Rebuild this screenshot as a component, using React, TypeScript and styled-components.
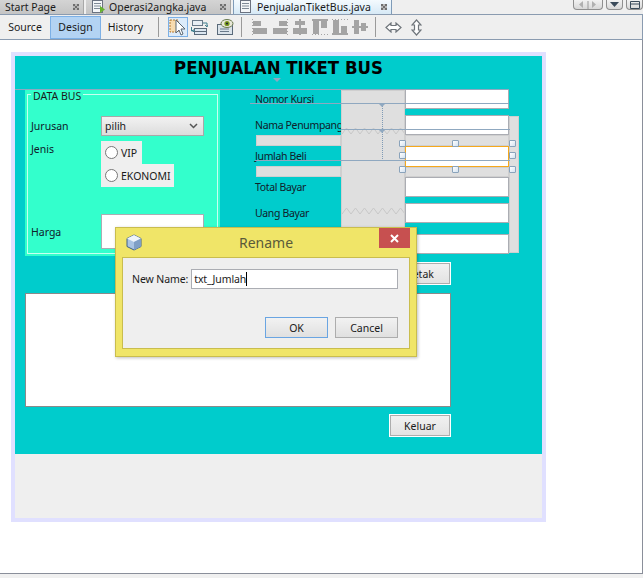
import React from 'react'
import styled, { createGlobalStyle } from 'styled-components'

const GlobalStyle = createGlobalStyle`
	html, body { margin: 0; padding: 0; background: #f0f0f0; }
	body { font-family: "Noto Sans", "Liberation Sans", sans-serif; font-size: 10.5px; color: #1a1a1a; }
	* { box-sizing: border-box; }
`

const Page = styled.div`
	width: 643px;
	height: 578px;
	display: flex;
	flex-direction: column;
	overflow: hidden;
	background: #f0f0f0;
`

/* editor tabs */
const TabStrip = styled.div`
	height: 15px;
	flex: none;
	display: flex;
	border-bottom: 1px solid #8a9bb0;
	background: #efefef;
`
const Tab = styled.div<{ $w: number; $active?: boolean }>`
	width: ${p => p.$w}px;
	margin-right: 2px;
	padding: 0 3px 1px 5px;
	display: flex;
	align-items: center;
	gap: 4px;
	line-height: 12px;
	overflow: hidden;
	background: ${p => (p.$active ? 'linear-gradient(#f4fafe, #d6e9f6)' : 'linear-gradient(#d4d4d4, #c4c4c4)')};
	border-right: 1px solid ${p => (p.$active ? '#7f9bb8' : '#a8a8a8')};
	border-left: ${p => (p.$active ? '1px solid #7f9bb8' : 'none')};
	& > span { flex: 1; white-space: nowrap; }
	& > svg { flex: none; }
`
const WindowControls = styled.div`
	margin-left: auto;
	display: flex;
	gap: 3px;
	align-items: flex-start;
`
const WindowButton = styled.div<{ $w: number }>`
	width: ${p => p.$w}px;
	height: 10px;
	display: flex;
	align-items: center;
	justify-content: center;
	border: 1px solid #8f8f8f;
	border-top: none;
	border-radius: 0 0 4px 4px;
	background: linear-gradient(#f2f2f2, #d8d8d8);
`

/* toolbar */
const Toolbar = styled.div`
	height: 25px;
	flex: none;
	display: flex;
	align-items: center;
	border-bottom: 1px solid #8a9bb0;
	border-right: 1px solid #8a9bb0;
	background: #efefef;
`
const ViewButton = styled.div<{ $w: number; $active?: boolean }>`
	width: ${p => p.$w}px;
	height: 23px;
	display: flex;
	align-items: center;
	justify-content: center;
	background: ${p => (p.$active ? '#b3d3f3' : 'transparent')};
	border: 1px solid ${p => (p.$active ? '#7cb0e6' : 'transparent')};
`
const ToolDivider = styled.div<{ $left: number; $right: number }>`
	width: 1px;
	height: 20px;
	flex: none;
	background: #9a9a9a;
	margin: 0 ${p => p.$right}px 0 ${p => p.$left}px;
`
const ToolIcon = styled.div<{ $w: number; $after?: number; $toggled?: boolean }>`
	width: ${p => p.$w}px;
	height: 20px;
	flex: none;
	margin-right: ${p => p.$after ?? 0}px;
	display: flex;
	align-items: center;
	justify-content: center;
	border: 1px solid ${p => (p.$toggled ? '#7cb0e6' : 'transparent')};
	background: ${p => (p.$toggled ? '#dcebfa' : 'transparent')};
	& > svg { flex: none; }
`

/* designer surface */
const Surface = styled.div`
	height: 534px;
	flex: none;
	padding: 12px 0 0 11px;
	background: #fff;
	border-right: 1px solid #8a8f9a;
	border-bottom: 1px solid #8a8f9a;
`
const FormFrame = styled.div`
	width: 535px;
	height: 470px;
	display: flex;
	flex-direction: column;
	border: 4px solid #e0e0ff;
	background: #efefef;
`
const FormCanvas = styled.div`
	position: relative;
	height: 398px;
	flex: none;
	padding-left: 10px;
	display: flex;
	flex-direction: column;
	background: #00cccc;
`
const FormTitle = styled.div`
	height: 33px;
	flex: none;
	margin-left: -10px;
	text-align: center;
	font-size: 18px;
	line-height: 24px;
	font-weight: 700;
	color: #000;
	font-family: "DejaVu Sans", sans-serif;
	transform: scaleX(0.92);
`
const MainRow = styled.div`
	height: 167px;
	flex: none;
	display: flex;
	align-items: flex-start;
`
const Panel = styled.div`
	position: relative;
	width: 195px;
	height: 167px;
	flex: none;
	margin-right: 35px;
	padding-top: 27px;
	display: flex;
	flex-direction: column;
	background: #33ffcc;
`
const PanelBorder = styled.div`
	position: absolute;
	left: 2px;
	right: 2px;
	top: 5px;
	bottom: 2px;
	border: 1px solid #c8fff0;
`
const PanelLegend = styled.div`
	position: absolute;
	left: 6px;
	top: 0;
	padding: 0 2px;
	line-height: 14px;
	background: #33ffcc;
`
const PanelRow = styled.div<{ $top?: number; $start?: boolean }>`
	position: relative;
	display: grid;
	grid-template-columns: 76px 103px;
	align-items: ${p => (p.$start ? 'start' : 'center')};
	margin-top: ${p => p.$top ?? 0}px;
`
const PanelLabel = styled.div<{ $drop?: number }>`
	padding-left: 6px;
	margin-top: ${p => p.$drop ?? 0}px;
	line-height: 14px;
	color: #10202a;
`
const PanelField = styled.div`
	height: 35px;
	background: #fff;
	border: 1px solid #abadb3;
`
const Combo = styled.div`
	height: 20px;
	display: flex;
	align-items: center;
	justify-content: space-between;
	padding: 0 5px 0 3px;
	border: 1px solid #a8a8a8;
	background: linear-gradient(#f2f2f2, #dcdcdc);
`
const RadioGroup = styled.div`
	display: flex;
	flex-direction: column;
	align-items: flex-start;
`
const RadioRow = styled.div<{ $w: number }>`
	width: ${p => p.$w}px;
	height: 23px;
	display: flex;
	align-items: center;
	gap: 3px;
	padding-left: 4px;
	background: #efefef;
`
const RadioDot = styled.span`
	width: 13px;
	height: 13px;
	flex: none;
	border-radius: 50%;
	background: #fff;
	border: 1px solid #777;
`
const LabelColumn = styled.div`
	width: 86px;
	flex: none;
	padding-top: 3px;
	display: flex;
	flex-direction: column;
`
const FieldLabel = styled.div<{ $after?: number }>`
	height: 14px;
	line-height: 14px;
	margin-bottom: ${p => p.$after ?? 0}px;
	white-space: nowrap;
	letter-spacing: -0.35px;
	color: #10202a;
`
const GapBar = styled.div<{ $h?: number }>`
	height: ${p => p.$h ?? 11}px;
	flex: none;
	background: #dfdfdf;
	border: 1px solid #cfcfcf;
`
const LabelBar = styled(GapBar)`
	margin: 3px 0 3px 1px;
`
const GapColumn = styled.div`
	width: 64px;
	height: 150px;
	flex: none;
	margin-top: 1px;
	background: #dfdfdf;
	border: 1px solid #cfcfcf;
`
const FieldColumn = styled.div`
	width: 104px;
	flex: none;
	display: flex;
	flex-direction: column;
`
const TextField = styled.div<{ $h?: number; $after?: number; $selected?: boolean }>`
	height: ${p => p.$h ?? 20}px;
	flex: none;
	margin-bottom: ${p => p.$after ?? 0}px;
	background: #fff;
	border: 1px solid ${p => (p.$selected ? '#f5a81c' : '#abadb3')};
`
const SideBar = styled(GapBar)`
	width: 10px;
	margin-top: 27px;
`
const BottomColumn = styled.div`
	width: 426px;
	flex: none;
	display: flex;
	flex-direction: column;
	align-items: flex-end;
`
const FormButton = styled.div<{ $top: number }>`
	width: 62px;
	height: 23px;
	margin-top: ${p => p.$top}px;
	display: flex;
	align-items: center;
	justify-content: center;
	border: 1px solid #fff;
	outline: 1px solid #adadad;
	outline-offset: -2px;
	background: linear-gradient(#f2f2f2, #e2e2e2);
`
const TextArea = styled.div`
	width: 100%;
	height: 114px;
	margin-top: 8px;
	background: #fff;
	border: 1px solid #8a8a8a;
`

/* designer overlays, drawn over the form */
const GuideLine = styled.div<{ $x: number; $y: number; $w: number }>`
	position: absolute;
	left: ${p => p.$x}px;
	top: ${p => p.$y}px;
	width: ${p => p.$w}px;
	height: 1px;
	background: #8fa8c0;
`
const GuideDots = styled.div<{ $y: number; $h: number }>`
	position: absolute;
	left: 367px;
	top: ${p => p.$y}px;
	height: ${p => p.$h}px;
	border-left: 1px dotted #7f9ab5;
`
const Anchor = styled.div<{ $x: number; $y: number }>`
	position: absolute;
	left: ${p => p.$x}px;
	top: ${p => p.$y}px;
	width: 0;
	height: 0;
	border-left: 4px solid transparent;
	border-right: 4px solid transparent;
	border-top: 4px solid #8fa8c0;
`
const Handle = styled.div<{ $x: number; $y: number }>`
	position: absolute;
	left: ${p => p.$x}px;
	top: ${p => p.$y}px;
	width: 7px;
	height: 7px;
	background: linear-gradient(135deg, #ffffff, #d4e2f0);
	border: 1px solid #8aa3bb;
	border-radius: 1px;
`
const Zigzag = styled.svg<{ $y: number }>`
	position: absolute;
	left: 327px;
	top: ${p => p.$y}px;
`

/* rename dialog */
const Dialog = styled.div`
	position: absolute;
	left: 100px;
	top: 171px;
	width: 302px;
	height: 130px;
	display: flex;
	flex-direction: column;
	padding: 0 6px 7px 6px;
	background: #f0e568;
	border: 1px solid #c9bd4e;
	box-shadow: 1px 1px 3px rgba(0, 0, 0, 0.25);
	z-index: 2;
`
const DialogHeader = styled.div`
	position: relative;
	height: 29px;
	flex: none;
	display: flex;
	align-items: center;
	justify-content: center;
	font-size: 14px;
	color: #5a5a3a;
`
const DialogIcon = styled.svg`
	position: absolute;
	left: 4px;
	top: 6px;
`
const CloseButton = styled.div`
	position: absolute;
	right: 0;
	top: 0;
	width: 31px;
	height: 20px;
	display: flex;
	align-items: center;
	justify-content: center;
	background: #c75050;
`
const DialogBody = styled.div`
	flex: 1;
	display: flex;
	flex-direction: column;
	justify-content: space-between;
	padding: 11px 11px 10px 9px;
	background: #efefef;
	border: 1px solid #c9bd4e;
`
const NameRow = styled.div`
	display: flex;
	align-items: center;
	gap: 3px;
	letter-spacing: -0.1px;
`
const NameInput = styled.div`
	flex: 1;
	height: 20px;
	display: flex;
	align-items: center;
	padding-left: 2px;
	background: #fff;
	border: 1px solid #abadb3;
`
const Caret = styled.span`
	width: 1px;
	height: 14px;
	background: #000;
`
const DialogActions = styled.div`
	display: flex;
	justify-content: flex-end;
	gap: 7px;
`
const DialogButton = styled.div<{ $primary?: boolean }>`
	width: 63px;
	height: 21px;
	display: flex;
	align-items: center;
	justify-content: center;
	background: linear-gradient(#f2f2f2, #e0e0e0);
	border: 1px solid ${p => (p.$primary ? '#6aa5e2' : '#adadad')};
`

const CloseMark = () => (
	<svg width="8" height="8" viewBox="0 0 8 8">
		<path d="M1 1h2v2H1zM5 1h2v2H5zM3 3h2v2H3zM1 5h2v2H1zM5 5h2v2H5z" fill="#6f6f6f" />
		<path d="M3 1h2v2H3zM1 3h2v2H1zM5 3h2v2H5zM3 5h2v2H3z" fill="#b5b5b5" />
	</svg>
)

const DocIcon = ({ badge }: { badge?: boolean }) => (
	<svg width="14" height="13" viewBox="0 0 14 13">
		<rect x="1.5" y="0.5" width="10" height="12" fill="#f4f6f8" stroke="#6b7280" />
		<path d="M3 3.5h7M3 6h7M3 8.5h7" stroke="#7f8a96" />
		{badge && <path d="M9 6l5 3.5L9 13z" fill="#66b32e" />}
	</svg>
)

const dotsLeft = 'M0 0h1v1H0zM0 3h1v1H0zM0 6h1v1H0zM0 9h1v1H0zM0 12h1v1H0zM0 15h1v1H0z'
const dotsRight = 'M15 0h1v1h-1zM15 3h1v1h-1zM15 6h1v1h-1zM15 9h1v1h-1zM15 12h1v1h-1zM15 15h1v1h-1z'
const dotsBottom = 'M0 15h1v1H0zM3 15h1v1H3zM6 15h1v1H6zM9 15h1v1H9zM12 15h1v1h-1zM15 15h1v1h-1z'
const dotsTop = 'M0 0h1v1H0zM3 0h1v1H3zM6 0h1v1H6zM9 0h1v1H9zM12 0h1v1h-1zM15 0h1v1h-1z'

const alignPaths = [
	dotsLeft + 'M1 2h8v5H1zM1 9h14v6H1z',
	dotsRight + 'M7 2h8v5H7zM1 9h14v6H1z',
	'M7 0h2v16H7zM3 2h10v4H3zM1 9h14v6H1z',
	dotsBottom + 'M0 0h16v2H0zM1 2h6v13H1zM9 2h6v7H9z',
	dotsTop + 'M0 14h16v2H0zM1 1h6v13H1zM9 7h6v7H9z',
	'M0 7h16v2H0zM2 1h5v14H2zM9 4h5v8H9z'
]

const zigzag = 'M0 7 ' + Array.from({ length: 7 }, (_, i) => `L${i * 9 + 4.5} 1 L${i * 9 + 9} 7`).join(' ')

export default function App() {
	return (
		<Page>
			<GlobalStyle />
			<TabStrip>
				<Tab $w={84}>
					<span>Start Page</span>
					<CloseMark />
				</Tab>
				<Tab $w={145}>
					<DocIcon badge />
					<span>Operasi2angka.java</span>
					<CloseMark />
				</Tab>
				<Tab $w={159} $active>
					<DocIcon />
					<span>PenjualanTiketBus.java</span>
					<CloseMark />
				</Tab>
				<WindowControls>
					<WindowButton $w={30}>
						<svg width="24" height="8" viewBox="0 0 24 8">
							<path d="M7 0v7L3 3.5zM16 0v7l4-3.5z" fill="#b0b0b0" />
							<path d="M12 0v8" stroke="#9a9a9a" />
						</svg>
					</WindowButton>
					<WindowButton $w={17}>
						<svg width="9" height="5" viewBox="0 0 9 5">
							<path d="M0 0h9L4.5 5z" fill="#3a4a5a" />
						</svg>
					</WindowButton>
					<WindowButton $w={17}>
						<svg width="10" height="8" viewBox="0 0 10 8">
							<path d="M0.5 0.5h9v7h-9zM0.5 3h9" stroke="#3a4a5a" fill="none" />
						</svg>
					</WindowButton>
				</WindowControls>
			</TabStrip>
			<Toolbar>
				<ViewButton $w={50}>Source</ViewButton>
				<ViewButton $w={51} $active>Design</ViewButton>
				<ViewButton $w={49}>History</ViewButton>
				<ToolDivider $left={8} $right={9} />
				<ToolIcon $w={20} $toggled $after={2}>
					<svg width="18" height="18" viewBox="0 0 18 18">
						<rect x="1" y="2" width="8" height="12" fill="#f8dcb0" stroke="#b87a30" strokeDasharray="2 1" />
						<path d="M7 2l9 9h-4l2 5-2 1-2-5-3 3z" fill="#fff" stroke="#5a6672" />
					</svg>
				</ToolIcon>
				<ToolIcon $w={18} $after={8}>
					<svg width="17" height="17" viewBox="0 0 17 17">
						<rect x="1.5" y="1.5" width="10" height="5" fill="#e8eef4" stroke="#6a7a8a" />
						<rect x="3.5" y="9.5" width="12" height="6" fill="#dbe6f0" stroke="#5a6a7a" />
						<path d="M3.5 12.5h12" stroke="#5a6a7a" />
						<path d="M12 4h4v3M14 6l2 2 1-2M0.5 8v4h3M1 11l2 2v-3" stroke="#3f7f8f" fill="none" />
					</svg>
				</ToolIcon>
				<ToolIcon $w={18} $after={7}>
					<svg width="17" height="17" viewBox="0 0 17 17">
						<rect x="0.5" y="5.5" width="15" height="10" fill="#dbe3ea" stroke="#5a6a7a" />
						<path d="M3 10h9M3 12.5h9" stroke="#6a7a8a" />
						<ellipse cx="10" cy="4.5" rx="6" ry="4" fill="#e8e8d8" stroke="#6a7a50" />
						<circle cx="10" cy="4.5" r="2.6" fill="#7a9a20" />
						<circle cx="10" cy="4.5" r="1.1" fill="#223" />
					</svg>
				</ToolIcon>
				<ToolDivider $left={0} $right={10} />
				{alignPaths.map((d, i) => (
					<ToolIcon key={d} $w={16} $after={i === 5 ? 0 : 4}>
						<svg width="16" height="16" viewBox="0 0 16 16">
							<path d={d} fill="#a4a4a4" />
						</svg>
					</ToolIcon>
				))}
				<ToolDivider $left={7} $right={9} />
				<ToolIcon $w={17} $after={9}>
					<svg width="17" height="11" viewBox="0 0 17 11">
						<path d="M1 5.5L6 1v2.5h5V1l5 4.5L11 10V7.5H6V10z" fill="#fff" stroke="#6f757b" strokeWidth="1.2" />
					</svg>
				</ToolIcon>
				<ToolIcon $w={11}>
					<svg width="11" height="17" viewBox="0 0 11 17">
						<path d="M5.5 1L10 6H7.5v5H10l-4.5 5L1 11h2.5V6H1z" fill="#fff" stroke="#6f757b" strokeWidth="1.2" />
					</svg>
				</ToolIcon>
			</Toolbar>
			<Surface>
				<FormFrame>
					<FormCanvas>
						<FormTitle>PENJUALAN TIKET BUS</FormTitle>
						<MainRow>
							<Panel>
								<PanelBorder />
								<PanelLegend>DATA BUS</PanelLegend>
								<PanelRow>
									<PanelLabel>Jurusan</PanelLabel>
									<Combo>
										<span>pilih</span>
										<svg width="9" height="6" viewBox="0 0 9 6">
											<path d="M1 1l3.5 3.5L8 1" stroke="#555" strokeWidth="1.5" fill="none" />
										</svg>
									</Combo>
								</PanelRow>
								<PanelRow $top={5} $start>
									<PanelLabel $drop={1}>Jenis</PanelLabel>
									<RadioGroup>
										<RadioRow $w={41}><RadioDot />VIP</RadioRow>
										<RadioRow $w={73}><RadioDot />EKONOMI</RadioRow>
									</RadioGroup>
								</PanelRow>
								<PanelRow $top={27}>
									<PanelLabel>Harga</PanelLabel>
									<PanelField />
								</PanelRow>
							</Panel>
							<LabelColumn>
								<FieldLabel $after={12}>Nomor Kursi</FieldLabel>
								<FieldLabel>Nama Penumpang</FieldLabel>
								<LabelBar />
								<FieldLabel>Jumlah Beli</FieldLabel>
								<LabelBar />
								<FieldLabel $after={12}>Total Bayar</FieldLabel>
								<FieldLabel>Uang Bayar</FieldLabel>
							</LabelColumn>
							<GapColumn />
							<FieldColumn>
								<TextField $after={6} />
								<TextField />
								<GapBar />
								<TextField $h={21} $selected />
								<GapBar $h={10} />
								<TextField $after={6} />
								<TextField $after={11} />
								<TextField />
							</FieldColumn>
							<SideBar $h={137} />
						</MainRow>
						<BottomColumn>
							<FormButton $top={6}>Cetak</FormButton>
							<TextArea />
							<FormButton $top={7}>Keluar</FormButton>
						</BottomColumn>

						<Anchor $x={258} $y={22} />
						<Zigzag $y={71} width="62" height="8" viewBox="0 0 62 8">
							<path d={zigzag} stroke="#c8c8c8" fill="none" />
						</Zigzag>
						<Zigzag $y={151} width="62" height="8" viewBox="0 0 62 8">
							<path d={zigzag} stroke="#c8c8c8" fill="none" />
						</Zigzag>
						<GuideLine $x={0} $y={33} $w={494} />
						<GuideLine $x={235} $y={47} $w={259} />
						<GuideLine $x={326} $y={73} $w={169} />
						<GuideLine $x={240} $y={104} $w={255} />
						<GuideDots $y={48} $h={25} />
						<GuideDots $y={74} $h={29} />
						<Anchor $x={363} $y={47} />
						<Anchor $x={363} $y={73} />
						<Handle $x={384} $y={84} />
						<Handle $x={437} $y={84} />
						<Handle $x={494} $y={84} />
						<Handle $x={384} $y={96} />
						<Handle $x={494} $y={96} />
						<Handle $x={384} $y={110} />
						<Handle $x={437} $y={110} />
						<Handle $x={494} $y={110} />

						<Dialog>
							<DialogHeader>
								<DialogIcon width="16" height="17" viewBox="0 0 16 17">
									<path d="M8 1l7 3.5v8L8 16l-7-3.5v-8z" fill="#a9c4e4" stroke="#3f5f85" />
									<path d="M1 4.5L8 8l7-3.5L8 1z" fill="#eef4fb" />
									<path d="M8 8v8l7-3.5v-8z" fill="#7f9fc6" />
								</DialogIcon>
								Rename
								<CloseButton>
									<svg width="9" height="9" viewBox="0 0 9 9">
										<path d="M1 1l7 7M8 1l-7 7" stroke="#fff" strokeWidth="2" />
									</svg>
								</CloseButton>
							</DialogHeader>
							<DialogBody>
								<NameRow>
									New Name:
									<NameInput>txt_Jumlah<Caret /></NameInput>
								</NameRow>
								<DialogActions>
									<DialogButton $primary>OK</DialogButton>
									<DialogButton>Cancel</DialogButton>
								</DialogActions>
							</DialogBody>
						</Dialog>
					</FormCanvas>
				</FormFrame>
			</Surface>
		</Page>
	)
}
